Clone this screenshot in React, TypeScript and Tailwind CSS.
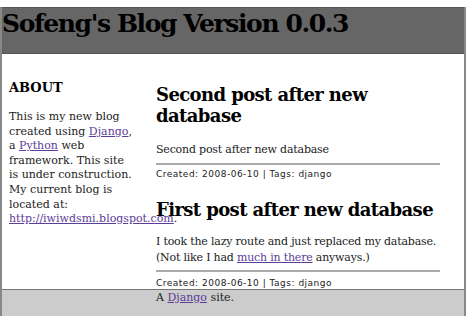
export default function App() {
  const serif = { fontFamily: '"DejaVu Serif", Georgia, serif' };
  const sans = { fontFamily: '"DejaVu Sans", Verdana, sans-serif' };
  return (
    <div className="w-[474px] h-[323px] bg-white overflow-hidden" style={serif}>
      <div className="mt-[7px] w-[466px] border-x-2 border-[#888] text-black">
        {/* header */}
        <div className="h-[47px] bg-[#666] border-y border-[#555] pt-[1px]">
          <h1 className="text-[25px] font-bold leading-[30px] tracking-[-1.4px]">Sofeng's Blog Version 0.0.3</h1>
        </div>

        <div className="flex h-[235px]">
          {/* sidebar */}
          <div className="w-[154px] shrink-0 pl-[7px] pt-[25px] pr-[22px]">
            <h3 className="text-[13px] font-bold leading-[18px] mb-[13px]">ABOUT</h3>
            <p className="text-[11px] leading-[14.6px] text-[#222]">
              This is my new blog created using{" "}
              <a href="#" className="underline text-[#5c3d99]">Django</a>, a{" "}
              <a href="#" className="underline text-[#5c3d99]">Python</a> web framework. This site is under
              construction. My current blog is located at:{" "}
              <a href="#" className="underline text-[#5c3d99] whitespace-nowrap">http://iwiwdsmi.blogspot.com</a>.
            </p>
          </div>

          {/* main */}
          <div className="w-[284px] shrink-0 pt-[30px]">
            <h2 className="text-[18px] font-bold leading-[21px] tracking-[-0.6px]">Second post after new database</h2>
            <p className="text-[11px] leading-[16px] mt-[16px] text-[#222] tracking-[-0.2px]">Second post after new database</p>
            <div className="border-t-2 border-[#aaa] mt-[5px]" />
            <div className="text-[9px] leading-[12px] tracking-[0.5px] text-[#222] mt-[3px]" style={sans}>
              Created: 2008-06-10 | Tags: django
            </div>

            <h2 className="text-[18px] font-bold leading-[21px] tracking-[-0.6px] mt-[19px]">First post after new database</h2>
            <p className="text-[11px] leading-[16px] mt-[14px] text-[#222] tracking-[-0.2px]">
              I took the lazy route and just replaced my database. (Not like I had{" "}
              <a href="#" className="underline text-[#5c3d99]">much in there</a> anyways.)
            </p>
            <div className="border-t-2 border-[#aaa] mt-[4px]" />
            <div className="text-[9px] leading-[12px] tracking-[0.5px] text-[#222] mt-[5px]" style={sans}>
              Created: 2008-06-10 | Tags: django
            </div>
          </div>
        </div>

        {/* footer */}
        <div className="h-[27px] bg-[#ccc] border-t border-[#777] pl-[154px]">
          <p className="text-[11px] leading-[16px] text-[#222]">
            A <a href="#" className="underline text-[#5c3d99]">Django</a> site.
          </p>
        </div>
      </div>
    </div>
  );
}
